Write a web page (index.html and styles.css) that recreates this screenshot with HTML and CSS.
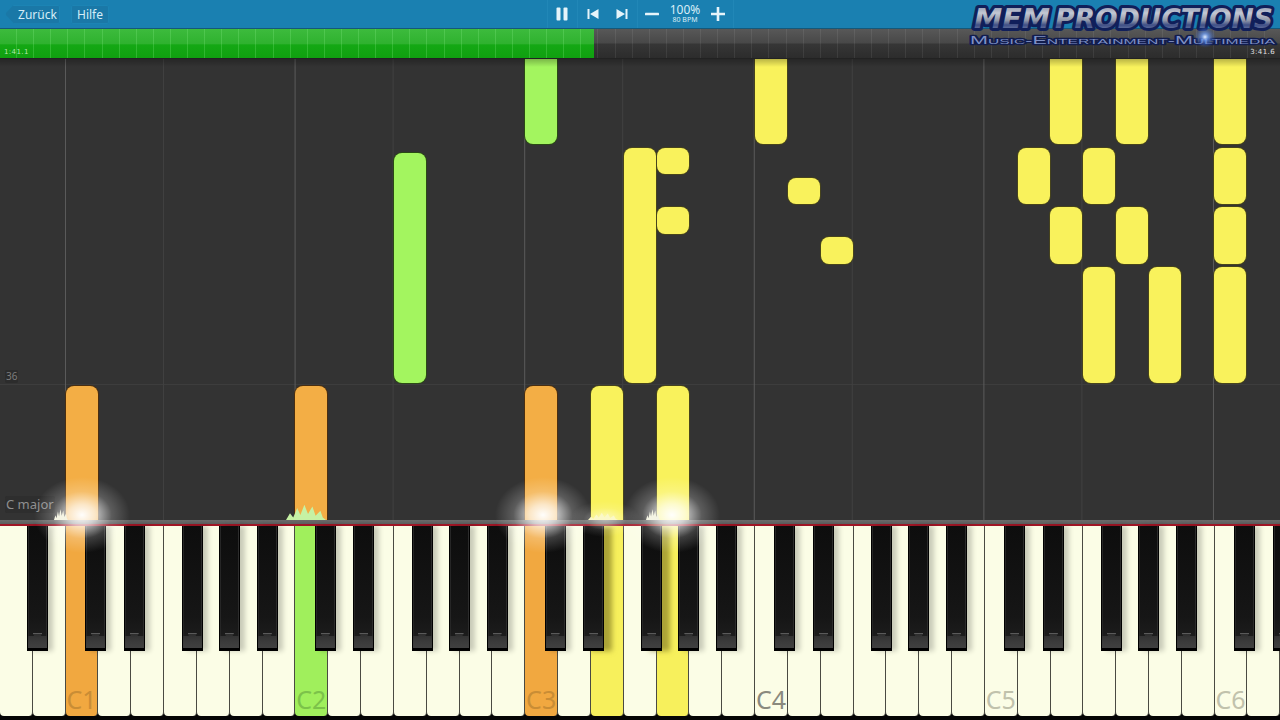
FILE: index.html
```html
<!DOCTYPE html>
<html lang="de">
<head>
<meta charset="utf-8">
<title>Synthesia</title>
<link rel="stylesheet" href="styles.css">
</head>
<body>
<div class="app">
  <header class="topbar">
    <nav class="nav-left">
      <button class="btn btn-back">Zurück</button>
      <button class="btn">Hilfe</button>
    </nav>
    <div class="transport">
      <div class="cell cell-play">
        <svg class="icon" width="14" height="16" viewBox="0 0 14 16"><rect x="1.5" y="1.5" width="4" height="13" rx="1"/><rect x="8.5" y="1.5" width="4" height="13" rx="1"/></svg>
      </div>
      <div class="cell cell-seek">
        <svg class="icon" width="12" height="12" viewBox="0 0 12 12"><path d="M0.5 1h2v10h-2zM11.5 1v10L3 6z"/></svg>
        <svg class="icon" width="12" height="12" viewBox="0 0 12 12"><path d="M11.5 1h-2v10h2zM0.5 1v10L9 6z"/></svg>
      </div>
      <div class="cell cell-speed">
        <svg class="icon" width="14" height="14" viewBox="0 0 14 14"><rect x="0" y="5.7" width="14" height="2.6" rx="0.6"/></svg>
        <div class="speed"><span class="speed-pct">100%</span><span class="speed-bpm">80 BPM</span></div>
        <svg class="icon" width="14" height="14" viewBox="0 0 14 14"><path d="M5.7 0h2.6v5.7H14v2.6H8.3V14H5.7V8.3H0V5.7h5.7z"/></svg>
      </div>
    </div>
  </header>

  <svg class="logo" width="320" height="50" viewBox="0 0 320 50">
    <defs>
      <linearGradient id="metal" x1="0" y1="0" x2="0" y2="1">
        <stop offset="0" stop-color="#7f8aa6"/>
        <stop offset="0.3" stop-color="#c4c9d4"/>
        <stop offset="0.55" stop-color="#8f96a8"/>
        <stop offset="0.7" stop-color="#3f4f86"/>
        <stop offset="1" stop-color="#8f9ab8"/>
      </linearGradient>
      <radialGradient id="flare">
        <stop offset="0" stop-color="#e4efff"/>
        <stop offset="0.3" stop-color="#6f9cf0" stop-opacity="0.8"/>
        <stop offset="1" stop-color="#2a4fb0" stop-opacity="0"/>
      </radialGradient>
    </defs>
    <text class="logo-main" x="14" y="28" textLength="76" lengthAdjust="spacingAndGlyphs" fill="url(#metal)">MEM</text>
    <text class="logo-main" x="95" y="28" textLength="218" lengthAdjust="spacingAndGlyphs" fill="url(#metal)">PRODUCTIONS</text>
    <text class="logo-sub" x="10" y="44" textLength="305" lengthAdjust="spacingAndGlyphs">Music-Entertainment-Multimedia</text>
    <circle cx="245" cy="37" r="11" fill="url(#flare)"/>
  </svg>

  <div class="timeline">
    <div class="progress"></div>
    <span class="time time-now">1:41.1</span>
    <span class="time time-end">3:41.6</span>
  </div>

  <main class="stage">
    <section class="field">
      <div class="note green" style="left:525px;top:-10px;height:95px"></div>
      <div class="note green" style="left:394px;top:94px;height:230px"></div>
      <div class="note yellow" style="left:624px;top:89px;height:235px"></div>
      <div class="note yellow" style="left:657px;top:89px;height:26px"></div>
      <div class="note yellow" style="left:657px;top:148px;height:27px"></div>
      <div class="note yellow" style="left:755px;top:-10px;height:95px"></div>
      <div class="note yellow" style="left:788px;top:119px;height:26px"></div>
      <div class="note yellow" style="left:821px;top:178px;height:27px"></div>
      <div class="note yellow" style="left:1050px;top:-10px;height:95px"></div>
      <div class="note yellow" style="left:1116px;top:-10px;height:95px"></div>
      <div class="note yellow" style="left:1214px;top:-10px;height:95px"></div>
      <div class="note yellow" style="left:1018px;top:89px;height:56px"></div>
      <div class="note yellow" style="left:1083px;top:89px;height:56px"></div>
      <div class="note yellow" style="left:1214px;top:89px;height:56px"></div>
      <div class="note yellow" style="left:1050px;top:148px;height:57px"></div>
      <div class="note yellow" style="left:1116px;top:148px;height:57px"></div>
      <div class="note yellow" style="left:1214px;top:148px;height:57px"></div>
      <div class="note yellow" style="left:1083px;top:208px;height:116px"></div>
      <div class="note yellow" style="left:1149px;top:208px;height:116px"></div>
      <div class="note yellow" style="left:1214px;top:208px;height:116px"></div>
      <div class="note orange" style="left:66px;top:327px;height:150px"></div>
      <div class="note orange" style="left:295px;top:327px;height:150px"></div>
      <div class="note orange" style="left:525px;top:327px;height:150px"></div>
      <div class="note yellow" style="left:591px;top:327px;height:150px"></div>
      <div class="note yellow" style="left:657px;top:327px;height:150px"></div>
      <span class="measure">36</span>
      <span class="key-sig">C major</span>
    </section>

    <section class="keyboard">
      <div class="rim"></div>
      <div class="keys">
        <div class="wk"><i class="bk bk-a"></i></div>
        <div class="wk"></div>
        <div class="wk wk-orange"><i class="bk bk-c"></i><span class="lbl">C1</span></div>
        <div class="wk"><i class="bk bk-d"></i></div>
        <div class="wk"></div>
        <div class="wk"><i class="bk bk-f"></i></div>
        <div class="wk"><i class="bk bk-g"></i></div>
        <div class="wk"><i class="bk bk-a"></i></div>
        <div class="wk"></div>
        <div class="wk wk-green"><i class="bk bk-c"></i><span class="lbl">C2</span></div>
        <div class="wk"><i class="bk bk-d"></i></div>
        <div class="wk"></div>
        <div class="wk"><i class="bk bk-f"></i></div>
        <div class="wk"><i class="bk bk-g"></i></div>
        <div class="wk"><i class="bk bk-a"></i></div>
        <div class="wk"></div>
        <div class="wk wk-orange"><i class="bk bk-c"></i><span class="lbl">C3</span></div>
        <div class="wk"><i class="bk bk-d bk-shade"></i></div>
        <div class="wk wk-yellow"></div>
        <div class="wk"><i class="bk bk-f bk-shade"></i></div>
        <div class="wk wk-yellow"><i class="bk bk-g"></i></div>
        <div class="wk"><i class="bk bk-a"></i></div>
        <div class="wk"></div>
        <div class="wk wk-c4"><i class="bk bk-c"></i><span class="lbl">C4</span></div>
        <div class="wk"><i class="bk bk-d"></i></div>
        <div class="wk"></div>
        <div class="wk"><i class="bk bk-f"></i></div>
        <div class="wk"><i class="bk bk-g"></i></div>
        <div class="wk"><i class="bk bk-a"></i></div>
        <div class="wk"></div>
        <div class="wk"><i class="bk bk-c"></i><span class="lbl">C5</span></div>
        <div class="wk"><i class="bk bk-d"></i></div>
        <div class="wk"></div>
        <div class="wk"><i class="bk bk-f"></i></div>
        <div class="wk"><i class="bk bk-g"></i></div>
        <div class="wk"><i class="bk bk-a"></i></div>
        <div class="wk"></div>
        <div class="wk"><i class="bk bk-c"></i><span class="lbl">C6</span></div>
        <div class="wk"><i class="bk bk-d"></i></div>
      </div>
    </section>

    <div class="glow glow-c1"></div>
    <div class="glow glow-c3"></div>
    <div class="glow glow-e3"></div>
    <div class="glow glow-g3"></div>
    <div class="spark spark-c1"></div>
    <div class="spark spark-c2"></div>
    <div class="spark spark-e3"></div>
    <div class="spark spark-g3"></div>
  </main>
</div>
</body>
</html>
```
FILE: styles.css
```css
* { box-sizing: border-box; }
html, body { margin: 0; height: 100%; overflow: hidden; background: #000; }
body { font-family: "Noto Sans", "Open Sans", sans-serif; }

.app { position: relative; width: 1280px; height: 720px; display: flex; flex-direction: column; overflow: hidden; }

/* top bar */
.topbar {
  height: 29px; flex: none; position: relative; display: flex; align-items: center;
  background: #1a80b1; border-bottom: 1px solid #15587a;
}
.nav-left { display: flex; gap: 11px; padding-left: 5px; align-items: center; }
.btn {
  height: 19px; padding: 0 6px; border: 0; border-radius: 2px;
  background: #1a78a7; color: #d5edf7; font: 12px "Noto Sans", sans-serif; line-height: 19px;
  box-shadow: inset 0 0 0 1px #1c84b4;
}
.btn-back { width: 55px; padding: 0 0 0 10px; clip-path: polygon(0 50%, 9px 0, 100% 0, 100% 100%, 9px 100%); }

.transport { position: absolute; left: 547px; top: 0; height: 28px; display: flex; }
.cell { height: 28px; display: flex; align-items: center; border-left: 1px solid #2187b7; }
.cell-play { width: 30px; padding-left: 7px; }
.cell-seek { width: 60px; padding-left: 9px; gap: 17px; }
.cell-speed { width: 97px; padding-left: 7px; border-right: 1px solid #2187b7; }
.icon { fill: #e6f4fa; flex: none; }
.speed { width: 52px; display: flex; flex-direction: column; align-items: center; color: #d9eef7; margin-top: -1px; }
.speed-pct { font-size: 12px; line-height: 12px; }
.speed-bpm { font-size: 7px; line-height: 8px; }

/* logo */
.logo { position: absolute; left: 960px; top: 0; z-index: 6; }
.logo-main {
  font: italic bold 26px "DejaVu Sans", sans-serif;
  stroke: #101f5a; stroke-width: 6px; paint-order: stroke; stroke-linejoin: round;
}
.logo-sub {
  font: 11px "Liberation Sans", sans-serif; font-variant: small-caps;
  fill: #7f90c4; stroke: #121d4e; stroke-width: 2.5px; paint-order: stroke; stroke-linejoin: round;
}

/* timeline */
.timeline {
  height: 30px; flex: none; position: relative;
  background:
    repeating-linear-gradient(90deg, transparent 0 16.1px, rgba(255,255,255,.07) 16.1px 17.1px),
    linear-gradient(#585858 0, #484848 48%, #363636 52%, #2c2c2c 100%);
  border-bottom: 1px solid #222;
}
.progress {
  position: absolute; left: 0; top: 0; bottom: 0; width: 594px;
  background:
    repeating-linear-gradient(90deg, transparent 0 16.1px, rgba(140,240,140,.25) 16.1px 17.1px),
    linear-gradient(#3dbb3d 0, #2fb22f 50%, #14a814 55%, #10a010 100%);
}
.time { position: absolute; top: 18px; font-size: 7px; line-height: 10px; letter-spacing: .4px; font-family: "DejaVu Sans", sans-serif; }
.time-now { left: 4px; color: #b5e8b0; }
.time-end { right: 5px; color: #e0e0e0; }

/* stage */
.stage { position: relative; flex: 1; display: flex; flex-direction: column; }
.field {
  position: relative; flex: 1; overflow: hidden; background-color: #333;
  background-image:
    linear-gradient(90deg, #5a5a5a 1px, transparent 1px),
    linear-gradient(90deg, #404040 1px, transparent 1px),
    linear-gradient(#3d3d3d, #3d3d3d);
  background-size: 229.6px 100%, 229.6px 100%, 100% 1px;
  background-position: 65px 0, 163px 0, 0 325px;
  background-repeat: repeat-x, repeat-x, no-repeat;
}
.field::after {
  content: ""; position: absolute; left: 0; right: 0; top: 0; height: 8px;
  background: linear-gradient(rgba(0,0,0,.25), rgba(0,0,0,0));
}
.note { position: absolute; width: 32px; border-radius: 8px; }
.yellow { background: #f9f25c; box-shadow: 0 0 0 1px #47441c; }
.green { background: #a3f55f; box-shadow: 0 0 0 1px #2a4a14; }
.orange { background: #f3ae45; box-shadow: 0 0 0 1px #4a2e10; }
.measure {
  position: absolute; left: 5px; top: 311px; padding: 0 1px; font-size: 10px; line-height: 13px;
  color: #7d7d7d; background: #2c2c2c; border-radius: 2px;
}
.key-sig {
  position: absolute; left: 5px; top: 437px; padding: 0 1px; font-size: 13px; line-height: 17px;
  color: #8f8f8f; background: #2e2e2e; border-radius: 2px;
}

/* keyboard */
.keyboard { flex: none; height: 200px; display: flex; flex-direction: column; background: #050505; }
.rim {
  height: 6px; flex: none;
  background: linear-gradient(#6b6b6b 0, #5e5e5e 60%, #a01525 61%, #a01525 100%);
}
.keys { height: 190px; flex: none; display: flex; }
.wk {
  position: relative; flex: 1 1 0; min-width: 0; background: #fbfde6;
  border-right: 1px solid #4a4a42; border-radius: 0 0 4px 4px;
}
.wk-orange { background: #f1a840; }
.wk-green { background: #a0ef5c; }
.wk-yellow { background: #f7f05c; }
.lbl {
  position: absolute; left: 0; right: 0; bottom: 1px; text-align: center;
  font-size: 25px; line-height: 32px; color: #c1c2ac;
}
.wk-orange .lbl { color: #c98d35; }
.wk-green .lbl { color: #7cc24a; }
.wk-c4 .lbl { color: #8a8a7e; }

.bk {
  position: absolute; top: 0; width: 21px; height: 125px; z-index: 2; display: block;
  background: linear-gradient(#0d0d0d 0, #161616 75%, #202020 100%);
  border: 1px solid #000; border-bottom-width: 3px; border-top: 0;
  box-shadow: inset 1px 0 0 #262626, inset -1px 0 0 #2c2c2c, 5px 0 5px rgba(0,0,0,.2);
}
.bk::before {
  content: ""; position: absolute; z-index: 1; left: 5px; right: 5px; bottom: 11px; height: 4px;
  background: linear-gradient(#5a5a5a 0, #5a5a5a 25%, #2e2e2e 30%, #333 100%);
  clip-path: polygon(0 0, 100% 0, 100% 25%, 78% 100%, 22% 100%, 0 25%);
}
.bk::after {
  content: ""; position: absolute; left: 0; right: 0; bottom: 0; height: 12px;
  background: linear-gradient(#333 0, #3b3b3b 50%, #404040 100%);
}
.bk-a { left: 27px; }
.bk-c { left: 19.4px; }
.bk-d { left: 25.2px; }
.bk-f { left: 17.6px; }
.bk-g { left: 21.8px; }
.bk-shade { box-shadow: inset 1px 0 0 #262626, inset -1px 0 0 #2c2c2c, 8px 0 5px rgba(120,112,30,.6); }

/* hit glow */
.glow { position: absolute; z-index: 5; width: 96px; height: 76px; top: 418px; pointer-events: none;
  background: radial-gradient(closest-side, rgba(255,255,255,.98) 0, rgba(255,255,255,.7) 28%, rgba(255,255,255,.2) 62%, rgba(255,255,255,0) 100%); }
.glow-c1 { left: 34px; }
.glow-c3 { left: 495px; }
.glow-e3 { left: 570px; width: 70px; height: 36px; top: 442px; opacity: .55; }
.glow-g3 { left: 624px; }

.spark { position: absolute; z-index: 6; height: 12px; top: 449px;
  clip-path: polygon(0 100%, 10% 60%, 18% 85%, 28% 30%, 36% 70%, 46% 10%, 55% 65%, 66% 20%, 74% 75%, 86% 45%, 92% 85%, 100% 100%); }
.spark-c1 { left: 54px; width: 14px; background: #f4f4e4; }
.spark-c2 { left: 286px; width: 40px; height: 17px; top: 444px; background: #c6f2a4; }
.spark-e3 { left: 588px; width: 30px; background: #fbf8c8; height: 8px; top: 453px; }
.spark-g3 { left: 646px; width: 14px; background: #f4f4e4; }
```
